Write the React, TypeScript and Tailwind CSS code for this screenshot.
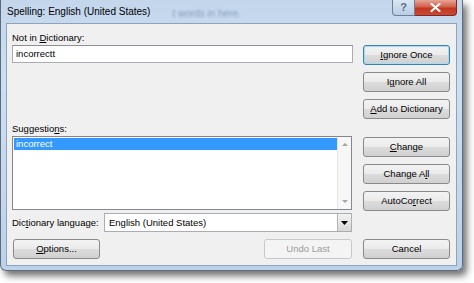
import React from 'react';

const font = "font-['Liberation_Sans',Arial,sans-serif]";

type BtnProps = {
  label: React.ReactNode;
  primary?: boolean;
  disabled?: boolean;
  className?: string;
};

const Btn: React.FC<BtnProps> = ({ label, primary, disabled, className = '' }) => {
  if (disabled) {
    return (
      <div
        className={`h-[20px] w-[87px] rounded-[3px] border border-[#c6c9cc] bg-[#f4f4f4] flex items-center justify-center text-[#9a9a9a] ${className}`}
      >
        {label}
      </div>
    );
  }
  return (
    <div
      className={`h-[20px] w-[87px] rounded-[3px] border ${
        primary ? 'border-[#3c7fb1] shadow-[inset_0_0_0_1px_#a8dcf4]' : 'border-[#8a8a8a]'
      } bg-[linear-gradient(to_bottom,#f3f3f3_0%,#ebebeb_48%,#dcdcdc_52%,#d0d0d0_100%)] flex items-center justify-center text-black ${className}`}
    >
      {label}
    </div>
  );
};

const U: React.FC<{ children: React.ReactNode }> = ({ children }) => <span className="underline underline-offset-[1px]">{children}</span>;

export default function App() {
  return (
    <div className={`w-[474px] h-[283px] bg-white overflow-hidden ${font} text-[9.5px] leading-[12px]`}>
      {/* window */}
      <div className="w-[463px] h-[271px] rounded-b-[6px] border-x border-b border-[#5d6b7c] bg-[linear-gradient(to_bottom,#c3d6ec_0%,#cddff2_30%,#bcd2ea_100%)] shadow-[4px_5px_7px_rgba(0,0,0,0.55)] flex flex-col">
        {/* title bar */}
        <div className="relative h-[23px] flex items-center pl-[6px] pr-[5px]">
          <span className="text-[10px] text-black leading-[12px]">Spelling: English (United States)</span>
          <span className="ml-[22px] mt-[5px] text-[10px] text-[#6f84a0] blur-[1px] opacity-70">t words in here.</span>
          <div className="ml-auto self-start flex">
            <div className="w-[23px] h-[16px] rounded-bl-[4px] border border-t-0 border-[#6b7f98] bg-[linear-gradient(to_bottom,#dbe6f3,#b9cde4)] flex items-center justify-center text-[#5a6f8c] text-[11px] font-bold leading-none">
              ?
            </div>
            <div className="w-[42px] h-[16px] rounded-br-[4px] border border-t-0 border-l-0 border-[#7a2a22] bg-[linear-gradient(to_bottom,#e6a595_0%,#d4604c_45%,#c2371f_55%,#c94a36_100%)] flex items-center justify-center">
              <svg width="11" height="9" viewBox="0 0 11 9">
                <path d="M1.5 1 L9.5 8 M9.5 1 L1.5 8" stroke="#fff" strokeWidth="2.2" strokeLinecap="round" />
              </svg>
            </div>
          </div>
        </div>

        {/* client area */}
        <div className="mx-[5px] h-[243px] border border-[#8fa3bb] bg-[#f0f0f0] flex pl-[5px] pr-[6px]">
          {/* left column */}
          <div className="w-[341px] flex flex-col">
            <div className="mt-[8px] h-[12px]">
              Not in <U>D</U>ictionary:
            </div>
            <div className="mt-[1px] h-[18px] border border-[#abadb3] border-t-[#8e9095] bg-white pl-[3px] flex items-center">
              incorrectt
            </div>

            <div className="mt-[60px] h-[12px]">
              Suggestio<U>n</U>s:
            </div>
            <div className="mt-[1px] h-[74px] w-[340px] border border-[#828790] bg-white flex">
              <div className="flex-1 pt-[1px] pl-[1px]">
                <div className="h-[12px] bg-[#3399ff] text-white pl-[2px] leading-[12px]">incorrect</div>
              </div>
              <div className="w-[14px] border-l border-[#e6e6e6] bg-[#f7f7f7] flex flex-col items-center justify-between py-[5px]">
                <svg width="6" height="4" viewBox="0 0 6 4">
                  <path d="M0 4 L3 1 L6 4 Z" fill="#a6a6a6" />
                </svg>
                <svg width="6" height="4" viewBox="0 0 6 4">
                  <path d="M0 0 L3 3 L6 0 Z" fill="#a6a6a6" />
                </svg>
              </div>
            </div>

            <div className="mt-[3px] h-[19px] flex items-center">
              <span>
                Dic<U>t</U>ionary language:
              </span>
              <div className="ml-auto mr-[1px] w-[248px] h-[19px] border border-[#abadb3] bg-white flex items-center">
                <span className="pl-[4px] flex-1">English (United States)</span>
                <div className="w-[14px] h-[17px] border-l border-[#b4b4b4] bg-[linear-gradient(to_bottom,#f2f2f2,#d8d8d8)] flex items-center justify-center">
                  <svg width="7" height="4" viewBox="0 0 7 4">
                    <path d="M0 0 L7 0 L3.5 4 Z" fill="#000" />
                  </svg>
                </div>
              </div>
            </div>

            <div className="mt-[7px] flex items-center">
              <Btn label={<><U>O</U>ptions...</>} className="ml-[1px]" />
              <Btn label="Undo Last" disabled className="ml-auto mr-[1px] w-[88px]" />
            </div>
          </div>

          {/* right column */}
          <div className="ml-[10px] w-[87px] flex flex-col">
            <Btn primary label={<><U>I</U>gnore Once</>} className="mt-[21px]" />
            <Btn label={<>I<U>g</U>nore All</>} className="mt-[7px]" />
            <Btn label={<><U>A</U>dd to Dictionary</>} className="mt-[7px]" />
            <Btn label={<><U>C</U>hange</>} className="mt-[18px]" />
            <Btn label={<>Change A<U>l</U>l</>} className="mt-[7px]" />
            <Btn label={<>AutoCo<U>r</U>rect</>} className="mt-[7px]" />
            <Btn label="Cancel" className="mt-[28px]" />
          </div>
        </div>
      </div>
    </div>
  );
}
